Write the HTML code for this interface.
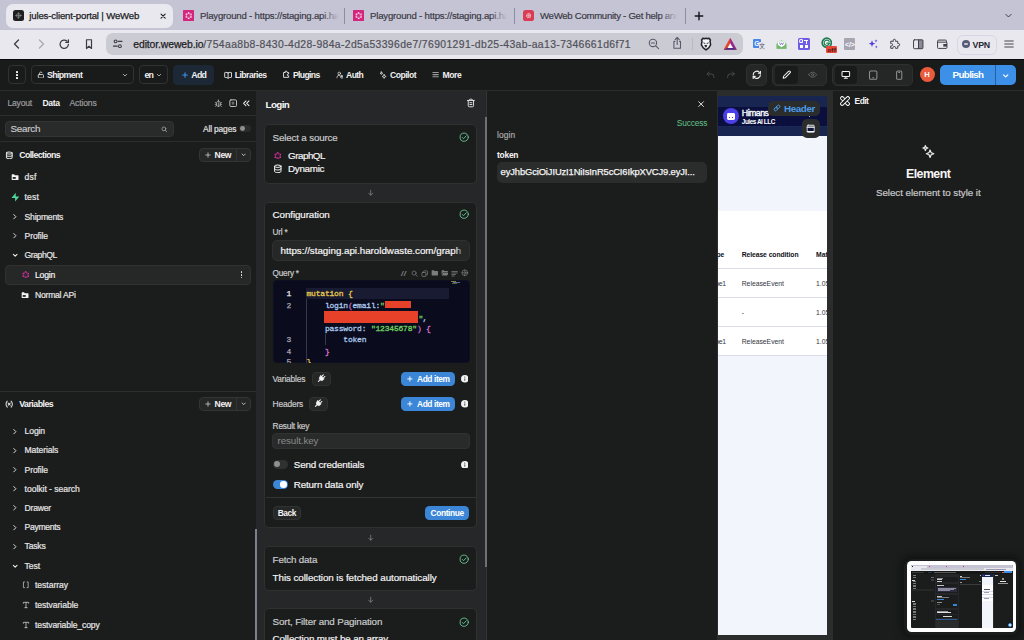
<!DOCTYPE html>
<html><head><meta charset="utf-8"><title>jules-client-portal | WeWeb</title>
<style>
*{box-sizing:border-box;margin:0;padding:0}
html,body{width:1024px;height:640px;overflow:hidden;background:#1c1d1d;font-family:"Liberation Sans",sans-serif;color:#e8e8e8}
.a{position:absolute;display:block}
.t{position:absolute;white-space:pre;display:block}
.p{display:inline-block;width:0;height:0}
</style></head><body>
<div class="a" style="left:0px;top:0px;width:1024px;height:30px;background:#c5c4d5;"></div>
<div class="a" style="left:0px;top:29.8px;width:1024px;height:29px;background:#e8e8ee;"></div>
<div class="a" style="left:6px;top:4px;width:167px;height:23.5px;background:#e8e8ee;border-radius:7px;"></div>
<div class="a" style="left:12.7px;top:10px;width:11.3px;height:11px;background:#1f1f22;border-radius:2.5px;"></div>
<svg class="a" style="left:14.8px;top:12.0px;" width="7" height="7" viewBox="0 0 24 24" fill="none" stroke="#8a8a8a" stroke-width="2.4" stroke-linecap="round" stroke-linejoin="round"><circle cx="12" cy="12" r="7"/><path d="M12 2v20M2 12h20"/></svg>
<span class="t" id="t0" style="left:29.3px;top:10.06px;font-size:9.6px;line-height:11.52px;color:#1c1c24;letter-spacing:-0.156px;-webkit-text-stroke:0.25px #1c1c24;">jules-client-portal | WeWeb</span>
<svg class="a" style="left:159.9px;top:12.5px;" width="6.2" height="6.2" viewBox="0 0 24 24" fill="none" stroke="#1d1c26" stroke-width="4.2" stroke-linecap="round" stroke-linejoin="round"><path d="M4 4l16 16M20 4L4 20"/></svg>
<div class="a" style="left:183px;top:9.9px;width:11px;height:11.1px;background:#d5267e;border-radius:0.6px;"></div>
<svg class="a" style="left:184.8px;top:11.8px;" width="7.4" height="7.4" viewBox="0 0 24 24" fill="none" stroke="#f3b3d4" stroke-width="1.6" stroke-linecap="round" stroke-linejoin="round"><path d="M12 3l7.800 4.500v9L12 21l-7.800-4.500v-9z" stroke-width="1.600"/><path d="M12 3l7.800 13.500H4.200z" stroke-width="1.400"/><circle cx="12" cy="3" r="2.300" fill="#fff" stroke="none"/><circle cx="12" cy="21" r="2.300" fill="#fff" stroke="none"/><circle cx="4.200" cy="7.500" r="2.300" fill="#fbe3f0" stroke="none"/><circle cx="19.800" cy="7.500" r="2.300" fill="#fbe3f0" stroke="none"/><circle cx="4.200" cy="16.500" r="2.300" fill="#fbe3f0" stroke="none"/><circle cx="19.800" cy="16.500" r="2.300" fill="#fbe3f0" stroke="none"/></svg>
<span class="t" id="t1" style="left:200px;top:10.06px;font-size:9.6px;line-height:11.52px;color:#3b3b46;letter-spacing:-0.189px;-webkit-text-stroke:0.2px #3b3b46;">Playground - https://staging.api.ha</span>
<div class="a" style="left:322px;top:6px;width:20px;height:19px;background:linear-gradient(90deg,rgba(197,196,213,0),#c5c4d5 85%);"></div>
<div class="a" style="left:344px;top:7.5px;width:1px;height:16px;background:#8f8da3;"></div>
<div class="a" style="left:353px;top:9.9px;width:11px;height:11.1px;background:#d5267e;border-radius:0.6px;"></div>
<svg class="a" style="left:354.8px;top:11.8px;" width="7.4" height="7.4" viewBox="0 0 24 24" fill="none" stroke="#f3b3d4" stroke-width="1.6" stroke-linecap="round" stroke-linejoin="round"><path d="M12 3l7.800 4.500v9L12 21l-7.800-4.500v-9z" stroke-width="1.600"/><path d="M12 3l7.800 13.500H4.200z" stroke-width="1.400"/><circle cx="12" cy="3" r="2.300" fill="#fff" stroke="none"/><circle cx="12" cy="21" r="2.300" fill="#fff" stroke="none"/><circle cx="4.200" cy="7.500" r="2.300" fill="#fbe3f0" stroke="none"/><circle cx="19.800" cy="7.500" r="2.300" fill="#fbe3f0" stroke="none"/><circle cx="4.200" cy="16.500" r="2.300" fill="#fbe3f0" stroke="none"/><circle cx="19.800" cy="16.500" r="2.300" fill="#fbe3f0" stroke="none"/></svg>
<span class="t" id="t2" style="left:370px;top:10.06px;font-size:9.6px;line-height:11.52px;color:#3b3b46;letter-spacing:-0.189px;-webkit-text-stroke:0.2px #3b3b46;">Playground - https://staging.api.ha</span>
<div class="a" style="left:490px;top:6px;width:20px;height:19px;background:linear-gradient(90deg,rgba(197,196,213,0),#c5c4d5 85%);"></div>
<div class="a" style="left:513.5px;top:7.5px;width:1px;height:16px;background:#8f8da3;"></div>
<div class="a" style="left:522.8px;top:9.9px;width:11.4px;height:11.3px;background:#d93c55;border-radius:2.6px;"></div>
<svg class="a" style="left:525.7px;top:12.7px;" width="5.6" height="5.6" viewBox="0 0 24 24" fill="none" stroke="#f6c3cc" stroke-width="3.4" stroke-linecap="round" stroke-linejoin="round"><circle cx="12" cy="12" r="9.500"/><path d="M12 3v18M3 12h18"/></svg>
<span class="t" id="t3" style="left:540px;top:10.06px;font-size:9.6px;line-height:11.52px;color:#3b3b46;letter-spacing:-0.281px;-webkit-text-stroke:0.2px #3b3b46;">WeWeb Community - Get help and</span>
<div class="a" style="left:660px;top:6px;width:21px;height:19px;background:linear-gradient(90deg,rgba(197,196,213,0),#c5c4d5 85%);"></div>
<div class="a" style="left:684.5px;top:7.5px;width:1px;height:16px;background:#8f8da3;"></div>
<svg class="a" style="left:693.5px;top:10.5px;" width="10" height="10" viewBox="0 0 24 24" fill="none" stroke="#15141c" stroke-width="3.4" stroke-linecap="round" stroke-linejoin="round"><path d="M12 3v18M3 12h18"/></svg>
<svg class="a" style="left:1003.5px;top:11.3px;" width="9" height="9" viewBox="0 0 24 24" fill="none" stroke="#3a3948" stroke-width="2.6" stroke-linecap="round" stroke-linejoin="round"><path d="M5 9l7 7 7-7"/></svg>
<svg class="a" style="left:11.0px;top:38.0px;" width="12" height="12" viewBox="0 0 24 24" fill="none" stroke="#3c3b46" stroke-width="2.5" stroke-linecap="round" stroke-linejoin="round"><path d="M15 4l-8 8 8 8"/></svg>
<svg class="a" style="left:34.5px;top:38.0px;" width="12" height="12" viewBox="0 0 24 24" fill="none" stroke="#a9a9b4" stroke-width="2.5" stroke-linecap="round" stroke-linejoin="round"><path d="M9 4l8 8-8 8"/></svg>
<svg class="a" style="left:58.25px;top:37.75px;" width="12.5" height="12.5" viewBox="0 0 24 24" fill="none" stroke="#3c3b46" stroke-width="2.4" stroke-linecap="round" stroke-linejoin="round"><path d="M20 12a8 8 0 1 1-2.600-5.900"/><path d="M20 3.500v5h-5" /></svg>
<svg class="a" style="left:83.0px;top:38.0px;" width="12" height="12" viewBox="0 0 24 24" fill="none" stroke="#3c3b46" stroke-width="2.4" stroke-linecap="round" stroke-linejoin="round"><path d="M7 3.500h10v17.500l-5-4.500-5 4.500z"/></svg>
<div class="a" style="left:105.5px;top:33px;width:637.5px;height:22.3px;background:#cbcbd3;border-radius:6.5px;"></div>
<svg class="a" style="left:112.25px;top:38.45px;" width="11.5" height="11.5" viewBox="0 0 24 24" fill="none" stroke="#3c3b46" stroke-width="2.2" stroke-linecap="round" stroke-linejoin="round"><circle cx="7.500" cy="7" r="3"/><path d="M13 7h8"/><circle cx="16.500" cy="17" r="3"/><path d="M3 17h8"/></svg>
<span class="t" id="t4" style="left:133.3px;top:39.14px;font-size:10.4px;line-height:12.48px;color:#1c1c24;letter-spacing:-0.108px;-webkit-text-stroke:0.25px #1c1c24;">editor.weweb.io</span>
<span class="t" id="t5" style="left:203.3px;top:39.14px;font-size:10.4px;line-height:12.48px;color:#50505a;letter-spacing:0.369px;-webkit-text-stroke:0.2px #50505a;">/754aa8b8-8430-4d28-984a-2d5a53396de7/76901291-db25-43ab-aa13-7346661d6f71</span>
<svg class="a" style="left:646.7px;top:37.4px;" width="13.6" height="13.6" viewBox="0 0 24 24" fill="none" stroke="#5a5868" stroke-width="1.9" stroke-linecap="round" stroke-linejoin="round"><circle cx="10.500" cy="10.500" r="6.500"/><path d="M15.500 15.500l5 5M7.500 10.500h6"/></svg>
<svg class="a" style="left:670.3px;top:36.1px;" width="14.4" height="14.4" viewBox="0 0 24 24" fill="none" stroke="#5a5868" stroke-width="1.8" stroke-linecap="round" stroke-linejoin="round"><path d="M12 14V3M8.500 6L12 2.500 15.500 6"/><path d="M8 9H6.500v11.500h11V9H16"/></svg>
<div class="a" style="left:692px;top:38px;width:1px;height:12px;background:#b9b7c8;"></div>
<svg class="a" style="left:699.0px;top:37.2px;" width="14" height="14" viewBox="0 0 24 24" fill="none" stroke="#e8e8e8" stroke-width="2" stroke-linecap="round" stroke-linejoin="round"><path d="M12 2.200l3.200.9 2-.9 2.400 2.900-.7 2 1 6.400-3.300 5.300L12 22.200l-4.600-3.400-3.300-5.300 1-6.400-.7-2 2.400-2.900 2 .9z" fill="#f6f6fa" stroke="#22222c" stroke-width="2.600"/><path d="M8.200 10.200l2 .8M15.800 10.200l-2 .8M10.500 14.500h3l-1.500 2.500z" stroke="#22222c" stroke-width="1.600" fill="#22222c"/></svg>
<svg class="a" style="left:721.95px;top:35.75px;" width="16.5" height="16.5" viewBox="0 0 24 24" fill="none" stroke="#e8e8e8" stroke-width="2" stroke-linecap="round" stroke-linejoin="round"><path d="M12 3L2.500 20h19z" fill="#e8432d" stroke="none"/><path d="M12 3L2.500 20 12 14.500z" fill="#e8432d" stroke="none"/><path d="M12 3l9.500 17L12 14.500z" fill="#8d2a9a" stroke="none"/><path d="M2.500 20h19L12 14.500z" fill="#4a2a8c" stroke="none"/><path d="M12 10.500l4 7h-8z" fill="#fff" stroke="none"/></svg>
<div class="a" style="left:752.7px;top:38.5px;width:8px;height:9.5px;background:#4a86e8;border-radius:1px;"></div>
<span class="t" id="t6" style="left:754.2px;top:39.54px;font-size:6.5px;line-height:7.8px;color:#fff;font-weight:bold;">G</span>
<div class="a" style="left:758.5px;top:42px;width:6px;height:8px;background:#e3e3ea;border-radius:1px;"></div>
<span class="t" id="t7" style="left:759.3px;top:43.18px;font-size:5.5px;line-height:6.6px;color:#55556a;font-family:'Liberation Sans','Noto Sans CJK SC',sans-serif;">文</span>
<svg class="a" style="left:774.9px;top:37.7px;" width="13" height="13" viewBox="0 0 24 24" fill="none" stroke="#e8e8e8" stroke-width="2" stroke-linecap="round" stroke-linejoin="round"><path d="M3 10l9-6 9 6v10H3z" fill="#86c582" stroke="none"/><path d="M5.500 6h13v8l-6.500 4-6.500-4z" fill="#fff" stroke="#9bd397" stroke-width=".6"/><path d="M3 11l9 6 9-6v9H3z" fill="#74b86f" stroke="none"/><path d="M8.500 9l1.500 3.500L12 9l2 3.500L15.500 9" stroke="#6a5acd" stroke-width="1.300" fill="none"/></svg>
<div class="a" style="left:798.4px;top:38.1px;width:11.7px;height:11.6px;background:#6e5be6;border-radius:1.6px;"></div>
<svg class="a" style="left:799.2px;top:39.3px;" width="4.2" height="4.2" viewBox="0 0 24 24" fill="none" stroke="#fff" stroke-width="6" stroke-linecap="round" stroke-linejoin="round"><circle cx="12" cy="12" r="9" fill="none"/></svg>
<div class="a" style="left:804.2px;top:39.7px;width:4.2px;height:1.4px;background:#fff;"></div>
<div class="a" style="left:805.6px;top:39.7px;width:1.4px;height:4px;background:#fff;"></div>
<div class="a" style="left:799.8px;top:44.8px;width:3.6px;height:3.4px;background:#fff;"></div>
<div class="a" style="left:804.8px;top:44.8px;width:3.6px;height:3.4px;background:#fff;"></div>
<svg class="a" style="left:820.75px;top:36.75px;" width="11.5" height="11.5" viewBox="0 0 24 24" fill="none" stroke="#e8e8e8" stroke-width="2" stroke-linecap="round" stroke-linejoin="round"><circle cx="12" cy="12" r="9.500" fill="#fff" stroke="#1f7a52" stroke-width="3.600"/><path d="M17 9.500A5.500 5.500 0 1 0 17.500 13H12" stroke="#1f7a52" stroke-width="2.600" fill="none"/></svg>
<div class="a" style="left:826px;top:46px;width:11px;height:7px;background:#e8483a;border-radius:1.2px;"></div>
<span class="t" id="t8" style="left:827.2px;top:45.63px;font-size:6.2px;line-height:7.44px;color:#3a1410;font-weight:bold;letter-spacing:0.365px;">off</span>
<div class="a" style="left:844px;top:38.3px;width:11.4px;height:11.4px;background:#a6a5b1;border-radius:1.2px;"></div>
<span class="t" id="t9" style="left:845px;top:40.52px;font-size:7px;line-height:8.4px;color:#fbfbff;font-weight:bold;letter-spacing:-0.175px;">&lt;/&gt;</span>
<svg class="a" style="left:866.5px;top:37.8px;" width="12" height="12" viewBox="0 0 24 24" fill="none" stroke="#e8e8e8" stroke-width="2" stroke-linecap="round" stroke-linejoin="round"><path d="M10 4.500l1.800 5 5 1.800-5 1.800L10 18l-1.800-4.900-5-1.800 5-1.800z" fill="#4f3be0" stroke="none"/><path d="M18 2.500l.9 2.400 2.400.9-2.400.9-.9 2.400-.9-2.400-2.400-.9 2.400-.9z" fill="#4f3be0" stroke="none"/><path d="M18.500 15l.8 2.100 2.100.8-2.100.8-.8 2.100-.8-2.100-2.100-.8 2.100-.8z" fill="#4f3be0" stroke="none"/></svg>
<svg class="a" style="left:888.0px;top:37.5px;" width="13" height="13" viewBox="0 0 24 24" fill="none" stroke="#3f3e4a" stroke-width="1.8" stroke-linecap="round" stroke-linejoin="round"><path d="M9.500 4.500a2.200 2.200 0 0 1 4.400 0V6H18v4.200h1.300a2.200 2.200 0 0 1 0 4.400H18V19h-4.200v-1.300a2.200 2.200 0 0 0-4.400 0V19H5v-4.400h1.300a2.200 2.200 0 0 0 0-4.400H5V6h4.500z"/></svg>
<svg class="a" style="left:912.25px;top:37.75px;" width="12.5" height="12.5" viewBox="0 0 24 24" fill="none" stroke="#3f3e4a" stroke-width="1.9" stroke-linecap="round" stroke-linejoin="round"><rect x="3" y="3.500" width="18" height="17" rx="1.500"/><rect x="12.500" y="3.500" width="8.500" height="17" fill="#3f3e4a" opacity=".55" stroke="none"/><path d="M12.500 3.500v17"/></svg>
<svg class="a" style="left:936.25px;top:38.05px;" width="12.5" height="12.5" viewBox="0 0 24 24" fill="none" stroke="#3f3e4a" stroke-width="1.9" stroke-linecap="round" stroke-linejoin="round"><path d="M20 8V5.500A1.500 1.500 0 0 0 18.500 4H5.500A2.500 2.500 0 0 0 3 6.500v12A1.500 1.500 0 0 0 4.500 20h15a1.500 1.500 0 0 0 1.500-1.500V9.500A1.500 1.500 0 0 0 19.500 8H3"/><rect x="14" y="11.500" width="7" height="5" fill="#3f3e4a" stroke="none"/></svg>
<div class="a" style="left:957px;top:34.5px;width:39.5px;height:20px;background:#e8e8ee;border-radius:6px;border:1px solid #d8d6e4;"></div>
<div class="a" style="left:962.3px;top:40.3px;width:7.6px;height:7.6px;background:#5a5b78;border-radius:4px;"></div>
<div class="a" style="left:964px;top:43.4px;width:4.2px;height:1.4px;background:#cbcbd3;border-radius:1px;"></div>
<span class="t" id="t10" style="left:972.6px;top:39.57px;font-size:8.8px;line-height:10.56px;color:#2a2935;font-weight:bold;letter-spacing:-0.231px;">VPN</span>
<svg class="a" style="left:1002.5px;top:38.2px;" width="12" height="12" viewBox="0 0 24 24" fill="none" stroke="#3f3e4a" stroke-width="1.9" stroke-linecap="round" stroke-linejoin="round"><path d="M3.500 6h17M3.500 12h17M3.500 18h17"/></svg>
<div class="a" style="left:0px;top:58.5px;width:1024px;height:32px;background:#191a1a;"></div>
<div class="a" style="left:0px;top:58.5px;width:1024px;height:1.3px;background:#0b0b0b;"></div>
<div class="a" style="left:0px;top:90px;width:1024px;height:0.8px;background:#2a2b2b;"></div>
<div class="a" style="left:8.2px;top:65.3px;width:18.3px;height:19.2px;background:#191a1a;border-radius:4px;border:1px solid #313232;"></div>
<div class="a" style="left:16.4px;top:71.0px;width:1.9px;height:1.9px;background:#f4f4f4;border-radius:0.6px;"></div>
<div class="a" style="left:16.4px;top:74.1px;width:1.9px;height:1.9px;background:#f4f4f4;border-radius:0.6px;"></div>
<div class="a" style="left:16.4px;top:77.2px;width:1.9px;height:1.9px;background:#f4f4f4;border-radius:0.6px;"></div>
<div class="a" style="left:31.2px;top:65.3px;width:102.6px;height:19.2px;background:#191a1a;border-radius:4px;border:1px solid #313232;"></div>
<svg class="a" style="left:36.8px;top:70.6px;" width="7.8" height="7.8" viewBox="0 0 24 24" fill="none" stroke="#dedede" stroke-width="2.8" stroke-linecap="round" stroke-linejoin="round"><rect x="4" y="11" width="16" height="10.500" rx="2.500"/><path d="M8 11V7a4 4 0 0 1 7.600-1.600"/></svg>
<span class="t" id="t11" style="left:47px;top:69.87px;font-size:8.8px;line-height:10.56px;color:#f0f0f0;font-weight:bold;letter-spacing:-0.610px;">Shipment</span>
<svg class="a" style="left:122.0px;top:72.0px;" width="6" height="6" viewBox="0 0 24 24" fill="none" stroke="#d0d0d0" stroke-width="3" stroke-linecap="round" stroke-linejoin="round"><path d="M5 9l7 7 7-7"/></svg>
<div class="a" style="left:139px;top:65.3px;width:28.6px;height:19.2px;background:#191a1a;border-radius:4px;border:1px solid #313232;"></div>
<span class="t" id="t12" style="left:144.5px;top:69.87px;font-size:8.8px;line-height:10.56px;color:#f0f0f0;font-weight:bold;letter-spacing:-0.791px;">en</span>
<svg class="a" style="left:156.3px;top:72.0px;" width="6" height="6" viewBox="0 0 24 24" fill="none" stroke="#d0d0d0" stroke-width="3" stroke-linecap="round" stroke-linejoin="round"><path d="M5 9l7 7 7-7"/></svg>
<div class="a" style="left:172.8px;top:65.3px;width:41.4px;height:19.4px;background:#1d2836;border-radius:4.5px;"></div>
<svg class="a" style="left:181.6px;top:71.7px;" width="6" height="6" viewBox="0 0 24 24" fill="none" stroke="#3f8fe8" stroke-width="4.4" stroke-linecap="round" stroke-linejoin="round"><path d="M12 3v18M3 12h18"/></svg>
<span class="t" id="t13" style="left:191.3px;top:69.87px;font-size:8.8px;line-height:10.56px;color:#f0f0f0;font-weight:bold;letter-spacing:-0.703px;">Add</span>
<svg class="a" style="left:224.3px;top:70.6px;" width="8.2" height="8.2" viewBox="0 0 24 24" fill="none" stroke="#e4e4e4" stroke-width="2.7" stroke-linecap="round" stroke-linejoin="round"><path d="M12 5.500C10.500 4.300 8 4 3.500 4a1.500 1.500 0 0 0-1.500 1.500v12A1.500 1.500 0 0 0 3.500 19c4 0 6.500.300 8.500 2 2-1.700 4.500-2 8.500-2a1.500 1.500 0 0 0 1.500-1.500v-12A1.500 1.500 0 0 0 20.500 4C16 4 13.500 4.300 12 5.500zM12 5.500V21"/></svg>
<span class="t" id="t14" style="left:234.7px;top:69.8px;font-size:8.6px;line-height:10.32px;color:#f0f0f0;font-weight:bold;letter-spacing:-0.490px;">Libraries</span>
<svg class="a" style="left:282.0px;top:70.3px;" width="8.4" height="8.4" viewBox="0 0 24 24" fill="none" stroke="#e4e4e4" stroke-width="2.7" stroke-linecap="round" stroke-linejoin="round"><path d="M8.500 6a3 3 0 0 1 6 0v1H19v4.500h-1.500a2.500 2.500 0 0 0 0 5H19V21H4.500V7h4z"/></svg>
<span class="t" id="t15" style="left:293px;top:69.8px;font-size:8.6px;line-height:10.32px;color:#f0f0f0;font-weight:bold;letter-spacing:-0.635px;">Plugins</span>
<svg class="a" style="left:335.6px;top:70.8px;" width="7.8" height="7.8" viewBox="0 0 24 24" fill="none" stroke="#e0e0e0" stroke-width="2.4" stroke-linecap="round" stroke-linejoin="round"><circle cx="10" cy="7.500" r="4"/><path d="M3 21v-1.500a6 6 0 0 1 9-5.200"/><rect x="14.500" y="16" width="7" height="5.500" rx="1"/><path d="M16.500 16v-1.500a1.500 1.500 0 0 1 3 0V16"/></svg>
<span class="t" id="t16" style="left:346px;top:69.8px;font-size:8.6px;line-height:10.32px;color:#f0f0f0;font-weight:bold;letter-spacing:-0.570px;">Auth</span>
<svg class="a" style="left:379.4px;top:70.6px;" width="8.2" height="8.2" viewBox="0 0 24 24" fill="none" stroke="#e0e0e0" stroke-width="2.2" stroke-linecap="round" stroke-linejoin="round"><path d="M15 10l1.700 4.300L21 16l-4.300 1.700L15 22l-1.700-4.300L9 16l4.300-1.700z"/><path d="M7 2.500l1.100 2.900L11 6.500 8.100 7.600 7 10.500 5.900 7.600 3 6.500l2.900-1.100z"/></svg>
<span class="t" id="t17" style="left:390px;top:69.8px;font-size:8.6px;line-height:10.32px;color:#f0f0f0;font-weight:bold;letter-spacing:-0.513px;">Copilot</span>
<svg class="a" style="left:432.4px;top:71.1px;" width="7.2" height="7.2" viewBox="0 0 24 24" fill="none" stroke="#9c9c9c" stroke-width="3.6" stroke-linecap="round" stroke-linejoin="round"><path d="M3 5h18M3 12h18M3 19h18"/></svg>
<span class="t" id="t18" style="left:442.5px;top:69.8px;font-size:8.6px;line-height:10.32px;color:#f0f0f0;font-weight:bold;letter-spacing:-0.437px;">More</span>
<svg class="a" style="left:705.75px;top:69.95px;" width="9.5" height="9.5" viewBox="0 0 24 24" fill="none" stroke="#4b4c4c" stroke-width="2.4" stroke-linecap="round" stroke-linejoin="round"><path d="M8 5L3 10l5 5"/><path d="M3 10h10a7 7 0 0 1 7 7v2"/></svg>
<svg class="a" style="left:726.05px;top:69.95px;" width="9.5" height="9.5" viewBox="0 0 24 24" fill="none" stroke="#4b4c4c" stroke-width="2.4" stroke-linecap="round" stroke-linejoin="round"><path d="M16 5l5 5-5 5"/><path d="M21 10H11a7 7 0 0 0-7 7v2"/></svg>
<div class="a" style="left:746px;top:64px;width:21.2px;height:21.6px;background:#252626;border-radius:5px;border:1px solid #2e2f2f;"></div>
<svg class="a" style="left:751.8px;top:70.0px;" width="9.6" height="9.6" viewBox="0 0 24 24" fill="none" stroke="#f2f2f2" stroke-width="2.8" stroke-linecap="round" stroke-linejoin="round"><path d="M3 12a9 9 0 0 1 15.500-6.200L21 8"/><path d="M21 3v5h-5"/><path d="M21 12a9 9 0 0 1-15.500 6.200L3 16"/><path d="M3 21v-5h5"/></svg>
<div class="a" style="left:772.2px;top:64px;width:54.4px;height:21.6px;background:#252626;border-radius:5px;border:1px solid #2e2f2f;"></div>
<div class="a" style="left:775px;top:66.2px;width:22.6px;height:17.4px;background:#191a1a;border-radius:4px;"></div>
<svg class="a" style="left:781.6px;top:70.1px;" width="9.4" height="9.4" viewBox="0 0 24 24" fill="none" stroke="#f2f2f2" stroke-width="2.6" stroke-linecap="round" stroke-linejoin="round"><path d="M16.500 3.500a2.800 2.800 0 0 1 4 4L8 20l-5 1 1-5z"/></svg>
<svg class="a" style="left:808.3px;top:70.1px;" width="9.4" height="9.4" viewBox="0 0 24 24" fill="none" stroke="#6a6b6b" stroke-width="2.2" stroke-linecap="round" stroke-linejoin="round"><path d="M2 12s3.600-6.500 10-6.500S22 12 22 12s-3.600 6.500-10 6.500S2 12 2 12z"/><circle cx="12" cy="12" r="2.800"/></svg>
<div class="a" style="left:832.2px;top:64px;width:80.4px;height:21.6px;background:#252626;border-radius:5px;border:1px solid #2e2f2f;"></div>
<div class="a" style="left:834.7px;top:66.2px;width:22.4px;height:17.4px;background:#191a1a;border-radius:4px;"></div>
<svg class="a" style="left:841.2px;top:69.8px;" width="9.6" height="9.6" viewBox="0 0 24 24" fill="none" stroke="#f2f2f2" stroke-width="2.6" stroke-linecap="round" stroke-linejoin="round"><rect x="2.500" y="4" width="19" height="12.500" rx="2"/><rect x="6.500" y="8.500" width="11" height="3.500" fill="#050505" stroke="none"/><path d="M8 20.500h8M12 16.500v4"/></svg>
<svg class="a" style="left:867.6px;top:69.6px;" width="10.4" height="10.4" viewBox="0 0 24 24" fill="none" stroke="#8e8f8f" stroke-width="2.4" stroke-linecap="round" stroke-linejoin="round"><rect x="3.500" y="2.500" width="17" height="19" rx="2.500"/><path d="M11 18h2"/></svg>
<svg class="a" style="left:894.1px;top:69.6px;" width="10.4" height="10.4" viewBox="0 0 24 24" fill="none" stroke="#8e8f8f" stroke-width="2.4" stroke-linecap="round" stroke-linejoin="round"><rect x="6" y="2.500" width="12" height="19" rx="2.500"/><path d="M11 5.500h2"/></svg>
<div class="a" style="left:919.6px;top:66.7px;width:15.4px;height:15.4px;background:#ea5a3c;border-radius:8px;"></div>
<span class="t" id="t19" style="left:924.3px;top:70.34px;font-size:7.6px;line-height:9.12px;color:#fff;font-weight:bold;">H</span>
<div class="a" style="left:940px;top:64.8px;width:75.8px;height:20px;background:#3d90e8;border-radius:5px;"></div>
<div class="a" style="left:995.2px;top:64.8px;width:0.8px;height:20px;background:#2a5f9e;"></div>
<span class="t" id="t20" style="left:952.6px;top:69.33px;font-size:9.8px;line-height:11.76px;color:#fff;font-weight:bold;letter-spacing:-0.656px;">Publish</span>
<svg class="a" style="left:1002.1px;top:71.5px;" width="7.4" height="7.4" viewBox="0 0 24 24" fill="none" stroke="#fff" stroke-width="3.6" stroke-linecap="round" stroke-linejoin="round"><path d="M5 9l7 7 7-7"/></svg>
<div class="a" style="left:0px;top:90.8px;width:256px;height:550px;background:#1b1c1c;"></div>
<div class="a" style="left:256px;top:90.8px;width:231px;height:550px;background:#262728;"></div>
<div class="a" style="left:487px;top:90.8px;width:230px;height:550px;background:#1b1c1c;"></div>
<div class="a" style="left:717px;top:90.8px;width:116px;height:550px;background:#2b2c2c;"></div>
<div class="a" style="left:833px;top:90.8px;width:191px;height:550px;background:#1b1c1c;"></div>
<span class="t" id="t21" style="left:7.5px;top:98.3px;font-size:8.6px;line-height:10.32px;color:#9b9c9c;letter-spacing:-0.219px;-webkit-text-stroke:0.2px #9b9c9c;">Layout</span>
<span class="t" id="t22" style="left:42.5px;top:98.3px;font-size:8.6px;line-height:10.32px;color:#f4f4f4;font-weight:bold;letter-spacing:-0.385px;">Data</span>
<span class="t" id="t23" style="left:69.5px;top:98.3px;font-size:8.6px;line-height:10.32px;color:#9b9c9c;letter-spacing:-0.155px;-webkit-text-stroke:0.2px #9b9c9c;">Actions</span>
<svg class="a" style="left:214.1px;top:98.7px;" width="8.8" height="8.8" viewBox="0 0 24 24" fill="none" stroke="#b8b8b8" stroke-width="2" stroke-linecap="round" stroke-linejoin="round"><path d="M12 5.500c3 0 5 2.500 5 6.500v3c0 3-2 5.500-5 5.500s-5-2.500-5-5.500v-3c0-4 2-6.500 5-6.500z"/><path d="M12 2.500v3M12 10v10.500M3.500 9.500l3.500 2M20.500 9.500l-3.500 2M3 14.500h4M17 14.500h4M4 20l3.500-2.500M20 20l-3.500-2.500"/></svg>
<svg class="a" style="left:228.6px;top:99.1px;" width="8.4" height="8.4" viewBox="0 0 24 24" fill="none" stroke="#cfcfcf" stroke-width="2.6" stroke-linecap="round" stroke-linejoin="round"><rect x="2.500" y="2.500" width="19" height="19" rx="3"/><path d="M9.500 9v6M13.500 9v6" stroke-width="1.600"/></svg>
<svg class="a" style="left:242.2px;top:98.9px;" width="8.6" height="8.6" viewBox="0 0 24 24" fill="none" stroke="#f0f0f0" stroke-width="2.8" stroke-linecap="round" stroke-linejoin="round"><path d="M11 5.500l-6.500 6.500 6.500 6.500M19.500 5.500L13 12l6.500 6.500"/></svg>
<div class="a" style="left:0px;top:114.8px;width:256.5px;height:0.8px;background:#2c2d2d;"></div>
<div class="a" style="left:5px;top:121px;width:169.3px;height:15.6px;background:#292a2a;border-radius:4px;border:1px solid #333434;"></div>
<span class="t" id="t24" style="left:10.5px;top:123.13px;font-size:9.8px;line-height:11.76px;color:#c6c7c7;letter-spacing:-0.224px;-webkit-text-stroke:0.2px #c6c7c7;">Search</span>
<svg class="a" style="left:161.3px;top:125.5px;" width="6.6" height="6.6" viewBox="0 0 24 24" fill="none" stroke="#a8a9a9" stroke-width="2.8" stroke-linecap="round" stroke-linejoin="round"><circle cx="10.500" cy="10.500" r="7"/><path d="M16 16l5.500 5.500"/></svg>
<span class="t" id="t25" style="left:203px;top:123.82px;font-size:8.4px;line-height:10.08px;color:#e0e0e0;letter-spacing:-0.139px;-webkit-text-stroke:0.2px #e0e0e0;">All pages</span>
<div class="a" style="left:239px;top:125.3px;width:12px;height:7px;background:#2a2b2b;border-radius:3.5px;"></div>
<div class="a" style="left:239.8px;top:126.4px;width:4.8px;height:4.8px;background:#8f9090;border-radius:2.4px;"></div>
<div class="a" style="left:0px;top:141.3px;width:256.5px;height:0.8px;background:#2c2d2d;"></div>
<svg class="a" style="left:5.2px;top:150.7px;" width="8.6" height="8.6" viewBox="0 0 24 24" fill="none" stroke="#e0e0e0" stroke-width="2.8" stroke-linecap="round" stroke-linejoin="round"><ellipse cx="12" cy="5.500" rx="8" ry="3"/><path d="M4 5.500v13c0 1.700 3.600 3 8 3s8-1.300 8-3v-13"/><path d="M4 12c0 1.700 3.600 3 8 3s8-1.300 8-3"/></svg>
<span class="t" id="t26" style="left:19.2px;top:150.17px;font-size:8.8px;line-height:10.56px;color:#f4f4f4;font-weight:bold;letter-spacing:-0.584px;">Collections</span>
<div class="a" style="left:199.2px;top:147.6px;width:52px;height:14.6px;background:#252626;border-radius:4px;border:1px solid #333434;"></div>
<svg class="a" style="left:205.0px;top:151.9px;" width="6" height="6" viewBox="0 0 24 24" fill="none" stroke="#e0e0e0" stroke-width="2.8" stroke-linecap="round" stroke-linejoin="round"><path d="M12 3v18M3 12h18"/></svg>
<span class="t" id="t27" style="left:214.6px;top:150.1px;font-size:8.6px;line-height:10.32px;color:#f2f2f2;font-weight:bold;letter-spacing:-0.357px;">New</span>
<div class="a" style="left:236.2px;top:148.1px;width:0.8px;height:13.6px;background:#333434;"></div>
<svg class="a" style="left:240.9px;top:152.4px;" width="5.4" height="5.4" viewBox="0 0 24 24" fill="none" stroke="#e8e8e8" stroke-width="3.4" stroke-linecap="round" stroke-linejoin="round"><path d="M5 9l7 7 7-7"/></svg>
<svg class="a" style="left:10.9px;top:173.1px;" width="8.2" height="8.2" viewBox="0 0 24 24" fill="none" stroke="#e8e8e8" stroke-width="2" stroke-linecap="round" stroke-linejoin="round"><path d="M2 5.500A1.500 1.500 0 0 1 3.500 4h5.500l2 2.500h9.500A1.500 1.500 0 0 1 22 8v11a1.500 1.500 0 0 1-1.500 1.500h-17A1.500 1.500 0 0 1 2 19z" fill="#f2f2f2" stroke="none"/><rect x="5" y="12" width="9" height="5" fill="#1b1c1c" stroke="none"/></svg>
<span class="t" id="t28" style="left:24.6px;top:172.3px;font-size:8.6px;line-height:10.32px;color:#e6e6e6;letter-spacing:0.144px;-webkit-text-stroke:0.2px #e6e6e6;">dsf</span>
<svg class="a" style="left:10.0px;top:192.0px;" width="10.4" height="10.4" viewBox="0 0 24 24" fill="none" stroke="#e8e8e8" stroke-width="2" stroke-linecap="round" stroke-linejoin="round"><path d="M13.200 2L3.500 13.800h8.300v8.200L21.500 10.200h-8.300z" fill="#4fd79a" stroke="none"/></svg>
<span class="t" id="t29" style="left:24.6px;top:192.3px;font-size:8.6px;line-height:10.32px;color:#e6e6e6;letter-spacing:0.135px;-webkit-text-stroke:0.2px #e6e6e6;">test</span>
<svg class="a" style="left:10.6px;top:213.0px;" width="7.4" height="7.4" viewBox="0 0 24 24" fill="none" stroke="#dcdcdc" stroke-width="3.2" stroke-linecap="round" stroke-linejoin="round"><path d="M9 5l7 7-7 7"/></svg>
<span class="t" id="t30" style="left:24.6px;top:211.8px;font-size:8.6px;line-height:10.32px;color:#e6e6e6;letter-spacing:-0.223px;-webkit-text-stroke:0.2px #e6e6e6;">Shipments</span>
<svg class="a" style="left:10.6px;top:232.1px;" width="7.4" height="7.4" viewBox="0 0 24 24" fill="none" stroke="#dcdcdc" stroke-width="3.2" stroke-linecap="round" stroke-linejoin="round"><path d="M9 5l7 7-7 7"/></svg>
<span class="t" id="t31" style="left:24.6px;top:230.9px;font-size:8.6px;line-height:10.32px;color:#e6e6e6;letter-spacing:-0.137px;-webkit-text-stroke:0.2px #e6e6e6;">Profile</span>
<svg class="a" style="left:11.6px;top:252.0px;" width="6.4" height="6.4" viewBox="0 0 24 24" fill="none" stroke="#f0f0f0" stroke-width="4" stroke-linecap="round" stroke-linejoin="round"><path d="M5 8.500l7 7 7-7"/></svg>
<span class="t" id="t32" style="left:24.6px;top:250.1px;font-size:8.6px;line-height:10.32px;color:#e6e6e6;letter-spacing:-0.451px;-webkit-text-stroke:0.2px #e6e6e6;">GraphQL</span>
<div class="a" style="left:5px;top:265px;width:246.2px;height:19.6px;background:#262727;border-radius:4px;border:1px solid #303131;"></div>
<svg class="a" style="left:21.8px;top:270.8px;" width="7.6" height="7.6" viewBox="0 0 24 24" fill="none" stroke="#c42f95" stroke-width="1.8" stroke-linecap="round" stroke-linejoin="round"><path d="M12 2.500l8.200 4.750v9.500L12 21.500l-8.200-4.750v-9.500z"/><path d="M12 2.500l8.200 14.250H3.800z" stroke-width="1.800"/><circle cx="12" cy="2.500" r="2.100" fill="#d936a6" stroke="none"/><circle cx="12" cy="21.500" r="2.100" fill="#d936a6" stroke="none"/><circle cx="3.800" cy="7.250" r="2.100" fill="#d936a6" stroke="none"/><circle cx="20.200" cy="7.250" r="2.100" fill="#d936a6" stroke="none"/><circle cx="3.800" cy="16.750" r="2.100" fill="#d936a6" stroke="none"/><circle cx="20.200" cy="16.750" r="2.100" fill="#d936a6" stroke="none"/></svg>
<span class="t" id="t33" style="left:35px;top:269.7px;font-size:8.6px;line-height:10.32px;color:#f4f4f4;letter-spacing:-0.166px;-webkit-text-stroke:0.2px #f4f4f4;">Login</span>
<div class="a" style="left:240.8px;top:271.4px;width:1.5px;height:1.5px;background:#f0f0f0;border-radius:1px;"></div>
<div class="a" style="left:240.8px;top:274.09999999999997px;width:1.5px;height:1.5px;background:#f0f0f0;border-radius:1px;"></div>
<div class="a" style="left:240.8px;top:276.79999999999995px;width:1.5px;height:1.5px;background:#f0f0f0;border-radius:1px;"></div>
<svg class="a" style="left:21.4px;top:290.5px;" width="8.2" height="8.2" viewBox="0 0 24 24" fill="none" stroke="#e8e8e8" stroke-width="2" stroke-linecap="round" stroke-linejoin="round"><path d="M2 5.500A1.500 1.500 0 0 1 3.500 4h5.500l2 2.500h9.500A1.500 1.500 0 0 1 22 8v11a1.500 1.500 0 0 1-1.500 1.500h-17A1.500 1.500 0 0 1 2 19z" fill="#f2f2f2" stroke="none"/><rect x="5" y="12" width="9" height="5" fill="#1b1c1c" stroke="none"/></svg>
<span class="t" id="t34" style="left:35px;top:289.6px;font-size:8.6px;line-height:10.32px;color:#e6e6e6;letter-spacing:-0.238px;-webkit-text-stroke:0.2px #e6e6e6;">Normal APi</span>
<div class="a" style="left:0px;top:391px;width:256.5px;height:0.8px;background:#2c2d2d;"></div>
<svg class="a" style="left:5.3px;top:399.8px;" width="8.4" height="8.4" viewBox="0 0 24 24" fill="none" stroke="#e4e4e4" stroke-width="2.9" stroke-linecap="round" stroke-linejoin="round"><path d="M6.500 3.500C4 6 3 9 3 12s1 6 3.500 8.500M17.500 3.500C20 6 21 9 21 12s-1 6-3.500 8.500M9 9l6 6M15 9l-6 6"/></svg>
<span class="t" id="t35" style="left:19.2px;top:398.87px;font-size:8.8px;line-height:10.56px;color:#f4f4f4;font-weight:bold;letter-spacing:-0.516px;">Variables</span>
<div class="a" style="left:199.2px;top:396.5px;width:52px;height:14.6px;background:#252626;border-radius:4px;border:1px solid #333434;"></div>
<svg class="a" style="left:205.0px;top:400.8px;" width="6" height="6" viewBox="0 0 24 24" fill="none" stroke="#e0e0e0" stroke-width="2.8" stroke-linecap="round" stroke-linejoin="round"><path d="M12 3v18M3 12h18"/></svg>
<span class="t" id="t36" style="left:214.6px;top:399.0px;font-size:8.6px;line-height:10.32px;color:#f2f2f2;font-weight:bold;letter-spacing:-0.357px;">New</span>
<div class="a" style="left:236.2px;top:397.0px;width:0.8px;height:13.6px;background:#333434;"></div>
<svg class="a" style="left:240.9px;top:401.3px;" width="5.4" height="5.4" viewBox="0 0 24 24" fill="none" stroke="#e8e8e8" stroke-width="3.4" stroke-linecap="round" stroke-linejoin="round"><path d="M5 9l7 7 7-7"/></svg>
<svg class="a" style="left:10.6px;top:427.5px;" width="7.4" height="7.4" viewBox="0 0 24 24" fill="none" stroke="#dcdcdc" stroke-width="3.2" stroke-linecap="round" stroke-linejoin="round"><path d="M9 5l7 7-7 7"/></svg>
<span class="t" id="t37" style="left:24.6px;top:426.3px;font-size:8.6px;line-height:10.32px;color:#e6e6e6;letter-spacing:-0.126px;-webkit-text-stroke:0.2px #e6e6e6;">Login</span>
<svg class="a" style="left:10.6px;top:446.6px;" width="7.4" height="7.4" viewBox="0 0 24 24" fill="none" stroke="#dcdcdc" stroke-width="3.2" stroke-linecap="round" stroke-linejoin="round"><path d="M9 5l7 7-7 7"/></svg>
<span class="t" id="t38" style="left:24.6px;top:445.4px;font-size:8.6px;line-height:10.32px;color:#e6e6e6;letter-spacing:-0.131px;-webkit-text-stroke:0.2px #e6e6e6;">Materials</span>
<svg class="a" style="left:10.6px;top:465.8px;" width="7.4" height="7.4" viewBox="0 0 24 24" fill="none" stroke="#dcdcdc" stroke-width="3.2" stroke-linecap="round" stroke-linejoin="round"><path d="M9 5l7 7-7 7"/></svg>
<span class="t" id="t39" style="left:24.6px;top:464.6px;font-size:8.6px;line-height:10.32px;color:#e6e6e6;letter-spacing:-0.137px;-webkit-text-stroke:0.2px #e6e6e6;">Profile</span>
<svg class="a" style="left:10.6px;top:485.0px;" width="7.4" height="7.4" viewBox="0 0 24 24" fill="none" stroke="#dcdcdc" stroke-width="3.2" stroke-linecap="round" stroke-linejoin="round"><path d="M9 5l7 7-7 7"/></svg>
<span class="t" id="t40" style="left:24.6px;top:483.8px;font-size:8.6px;line-height:10.32px;color:#e6e6e6;letter-spacing:-0.043px;-webkit-text-stroke:0.2px #e6e6e6;">toolkit - search</span>
<svg class="a" style="left:10.6px;top:504.3px;" width="7.4" height="7.4" viewBox="0 0 24 24" fill="none" stroke="#dcdcdc" stroke-width="3.2" stroke-linecap="round" stroke-linejoin="round"><path d="M9 5l7 7-7 7"/></svg>
<span class="t" id="t41" style="left:24.6px;top:503.1px;font-size:8.6px;line-height:10.32px;color:#e6e6e6;letter-spacing:-0.251px;-webkit-text-stroke:0.2px #e6e6e6;">Drawer</span>
<svg class="a" style="left:10.6px;top:523.5px;" width="7.4" height="7.4" viewBox="0 0 24 24" fill="none" stroke="#dcdcdc" stroke-width="3.2" stroke-linecap="round" stroke-linejoin="round"><path d="M9 5l7 7-7 7"/></svg>
<span class="t" id="t42" style="left:24.6px;top:522.3px;font-size:8.6px;line-height:10.32px;color:#e6e6e6;letter-spacing:-0.315px;-webkit-text-stroke:0.2px #e6e6e6;">Payments</span>
<svg class="a" style="left:10.6px;top:542.6px;" width="7.4" height="7.4" viewBox="0 0 24 24" fill="none" stroke="#dcdcdc" stroke-width="3.2" stroke-linecap="round" stroke-linejoin="round"><path d="M9 5l7 7-7 7"/></svg>
<span class="t" id="t43" style="left:24.6px;top:541.4px;font-size:8.6px;line-height:10.32px;color:#e6e6e6;letter-spacing:-0.214px;-webkit-text-stroke:0.2px #e6e6e6;">Tasks</span>
<svg class="a" style="left:11.6px;top:562.5px;" width="6.4" height="6.4" viewBox="0 0 24 24" fill="none" stroke="#f0f0f0" stroke-width="4" stroke-linecap="round" stroke-linejoin="round"><path d="M5 8.500l7 7 7-7"/></svg>
<span class="t" id="t44" style="left:24.6px;top:560.6px;font-size:8.6px;line-height:10.32px;color:#e6e6e6;letter-spacing:-0.041px;-webkit-text-stroke:0.2px #e6e6e6;">Test</span>
<svg class="a" style="left:21.7px;top:581.4px;" width="7.6" height="7.6" viewBox="0 0 24 24" fill="none" stroke="#c8c8c8" stroke-width="2.4" stroke-linecap="round" stroke-linejoin="round"><path d="M8 3H4.500v18H8M16 3h3.500v18H16"/></svg>
<span class="t" id="t45" style="left:35px;top:580.3px;font-size:8.6px;line-height:10.32px;color:#e6e6e6;letter-spacing:-0.049px;-webkit-text-stroke:0.2px #e6e6e6;">testarray</span>
<svg class="a" style="left:21.5px;top:601.0px;" width="8" height="8" viewBox="0 0 24 24" fill="none" stroke="#d8d8d8" stroke-width="2.2" stroke-linecap="round" stroke-linejoin="round"><path d="M4 7V4h16v3M12 4v16M8.500 20h7"/></svg>
<span class="t" id="t46" style="left:35px;top:600.1px;font-size:8.6px;line-height:10.32px;color:#e6e6e6;letter-spacing:-0.063px;-webkit-text-stroke:0.2px #e6e6e6;">testvariable</span>
<svg class="a" style="left:21.5px;top:620.8px;" width="8" height="8" viewBox="0 0 24 24" fill="none" stroke="#d8d8d8" stroke-width="2.2" stroke-linecap="round" stroke-linejoin="round"><path d="M4 7V4h16v3M12 4v16M8.500 20h7"/></svg>
<span class="t" id="t47" style="left:35px;top:619.9px;font-size:8.6px;line-height:10.32px;color:#e6e6e6;letter-spacing:-0.135px;-webkit-text-stroke:0.2px #e6e6e6;">testvariable_copy</span>
<div class="a" style="left:254.5px;top:528.8px;width:2px;height:112px;background:#7b808c;"></div>
<span class="t" id="t48" style="left:265.6px;top:99.13px;font-size:9.8px;line-height:11.76px;color:#f6f6f6;font-weight:bold;letter-spacing:-0.614px;">Login</span>
<svg class="a" style="left:466.0px;top:98.0px;" width="9.8" height="9.8" viewBox="0 0 24 24" fill="none" stroke="#e6e6e6" stroke-width="2.3" stroke-linecap="round" stroke-linejoin="round"><path d="M3.500 6h17M8.500 6V4.500A1.500 1.500 0 0 1 10 3h4a1.500 1.500 0 0 1 1.500 1.500V6M5.500 6v13a2.500 2.500 0 0 0 2.500 2.500h8a2.500 2.500 0 0 0 2.500-2.500V6M9.500 11.500h5M9.500 16h5"/></svg>
<div class="a" style="left:486.4px;top:91px;width:0.8px;height:549px;background:#343535;"></div>
<div class="a" style="left:484.8px;top:116.5px;width:2.1px;height:450.4px;background:#6d7278;"></div>
<div class="a" style="left:264.2px;top:124.2px;width:213px;height:59.9px;background:#1b1c1c;border-radius:5px;border:1px solid #2f3030;"></div>
<span class="t" id="t49" style="left:272.6px;top:132.03px;font-size:9.8px;line-height:11.76px;color:#c9caca;letter-spacing:-0.169px;-webkit-text-stroke:0.2px #c9caca;">Select a source</span>
<svg class="a" style="left:458.8px;top:132.4px;" width="10.4" height="10.4" viewBox="0 0 24 24" fill="none" stroke="#68c995" stroke-width="2.1" stroke-linecap="round" stroke-linejoin="round"><circle cx="12" cy="12" r="9.500"/><path d="M7.500 12.500l3 3 6-6.500"/></svg>
<svg class="a" style="left:273.7px;top:151.6px;" width="7.8" height="7.8" viewBox="0 0 24 24" fill="none" stroke="#c42f95" stroke-width="1.8" stroke-linecap="round" stroke-linejoin="round"><path d="M12 2.500l8.200 4.750v9.500L12 21.500l-8.200-4.750v-9.500z"/><path d="M12 2.500l8.200 14.250H3.800z" stroke-width="1.800"/><circle cx="12" cy="2.500" r="2.100" fill="#d936a6" stroke="none"/><circle cx="12" cy="21.500" r="2.100" fill="#d936a6" stroke="none"/><circle cx="3.800" cy="7.250" r="2.100" fill="#d936a6" stroke="none"/><circle cx="20.200" cy="7.250" r="2.100" fill="#d936a6" stroke="none"/><circle cx="3.800" cy="16.750" r="2.100" fill="#d936a6" stroke="none"/><circle cx="20.200" cy="16.750" r="2.100" fill="#d936a6" stroke="none"/></svg>
<span class="t" id="t50" style="left:288px;top:150.03px;font-size:9.8px;line-height:11.76px;color:#f4f4f4;letter-spacing:-0.473px;-webkit-text-stroke:0.2px #f4f4f4;">GraphQL</span>
<svg class="a" style="left:272.7px;top:163.6px;" width="9.6" height="9.6" viewBox="0 0 24 24" fill="none" stroke="#f4f4f4" stroke-width="2.5" stroke-linecap="round" stroke-linejoin="round"><ellipse cx="12" cy="5.500" rx="8" ry="3"/><path d="M4 5.500v13c0 1.700 3.600 3 8 3s8-1.300 8-3v-13"/><path d="M4 12c0 1.700 3.600 3 8 3s8-1.300 8-3"/></svg>
<span class="t" id="t51" style="left:288px;top:163.03px;font-size:9.8px;line-height:11.76px;color:#f4f4f4;letter-spacing:-0.273px;-webkit-text-stroke:0.2px #f4f4f4;">Dynamic</span>
<svg class="a" style="left:367.1px;top:189.3px;" width="7.4" height="7.4" viewBox="0 0 24 24" fill="none" stroke="#8a8b8b" stroke-width="2.4" stroke-linecap="round" stroke-linejoin="round"><path d="M12 4v16M5.500 13.500L12 20l6.500-6.500"/></svg>
<div class="a" style="left:264.2px;top:202.2px;width:213px;height:326.2px;background:#1b1c1c;border-radius:5px;border:1px solid #2f3030;"></div>
<span class="t" id="t52" style="left:272.6px;top:209.13px;font-size:9.8px;line-height:11.76px;color:#f4f4f4;letter-spacing:-0.099px;-webkit-text-stroke:0.2px #f4f4f4;">Configuration</span>
<svg class="a" style="left:458.8px;top:209.4px;" width="10.4" height="10.4" viewBox="0 0 24 24" fill="none" stroke="#68c995" stroke-width="2.1" stroke-linecap="round" stroke-linejoin="round"><circle cx="12" cy="12" r="9.500"/><path d="M7.500 12.500l3 3 6-6.500"/></svg>
<span class="t" id="t53" style="left:272.6px;top:228.15px;font-size:8.2px;line-height:9.84px;color:#c9caca;letter-spacing:-0.184px;-webkit-text-stroke:0.2px #c9caca;">Url *</span>
<div class="a" style="left:272px;top:239.5px;width:197.6px;height:21px;background:#262727;border-radius:5px;border:1px solid #2f3030;"></div>
<span class="t" id="t54" style="left:280.6px;top:244.73px;font-size:9.8px;line-height:11.76px;color:#f6f6f6;letter-spacing:-0.019px;-webkit-text-stroke:0.2px #f6f6f6;">https://staging.api.haroldwaste.com/graph</span>
<div class="a" style="left:455px;top:241px;width:13px;height:18px;background:linear-gradient(90deg,rgba(38,39,39,0),#262727 80%);"></div>
<span class="t" id="t55" style="left:272.6px;top:268.55px;font-size:8.2px;line-height:9.84px;color:#c9caca;letter-spacing:-0.224px;-webkit-text-stroke:0.2px #c9caca;">Query *</span>
<span class="t" id="t56" style="left:401px;top:268.81px;font-size:7.8px;line-height:9.36px;color:#8a8b8b;font-weight:bold;letter-spacing:0.578px;font-style:italic;">//</span>
<svg class="a" style="left:410.5px;top:269.7px;" width="7" height="7" viewBox="0 0 24 24" fill="none" stroke="#7c7d7d" stroke-width="2.4" stroke-linecap="round" stroke-linejoin="round"><circle cx="10.500" cy="10.500" r="7"/><path d="M16 16l5.500 5.500"/></svg>
<svg class="a" style="left:420.5px;top:269.5px;" width="7.4" height="7.4" viewBox="0 0 24 24" fill="none" stroke="#7c7d7d" stroke-width="2.4" stroke-linecap="round" stroke-linejoin="round"><rect x="3" y="8" width="13" height="13" rx="2"/><path d="M8 8V5a2 2 0 0 1 2-2h9a2 2 0 0 1 2 2v9a2 2 0 0 1-2 2h-3"/></svg>
<svg class="a" style="left:430.7px;top:269.4px;" width="7.6" height="7.6" viewBox="0 0 24 24" fill="none" stroke="#e8e8e8" stroke-width="2" stroke-linecap="round" stroke-linejoin="round"><path d="M2 5.500A1.500 1.500 0 0 1 3.500 4h5.500l2 2.500h9.500A1.500 1.500 0 0 1 22 8v11a1.500 1.500 0 0 1-1.500 1.500h-17A1.500 1.500 0 0 1 2 19z" fill="#7c7d7d" stroke="none"/></svg>
<svg class="a" style="left:440.8px;top:269.4px;" width="7.6" height="7.6" viewBox="0 0 24 24" fill="none" stroke="#e8e8e8" stroke-width="2" stroke-linecap="round" stroke-linejoin="round"><path d="M2 5.500A1.500 1.500 0 0 1 3.500 4h5.500l2 2.500h9.500A1.500 1.500 0 0 1 22 8v3H6l-4 8z" fill="#7c7d7d" stroke="none"/><path d="M6.500 12.500H23.500l-3.500 8H2.500z" fill="#7c7d7d" stroke="none"/></svg>
<svg class="a" style="left:451.2px;top:269.6px;" width="7.2" height="7.2" viewBox="0 0 24 24" fill="none" stroke="#7c7d7d" stroke-width="2.6" stroke-linecap="round" stroke-linejoin="round"><path d="M3 5h18M3 10h18M3 15h12M3 20h8"/></svg>
<svg class="a" style="left:461.2px;top:269.4px;" width="7.6" height="7.6" viewBox="0 0 24 24" fill="none" stroke="#7c7d7d" stroke-width="2.2" stroke-linecap="round" stroke-linejoin="round"><circle cx="12" cy="12" r="9"/><circle cx="12" cy="12" r="3"/><path d="M12 3v4M12 17v4M3 12h4M17 12h4"/></svg>
<div class="a" style="left:272.5px;top:280px;width:197px;height:83px;background:#0a0b1d;border-radius:4px;border:1px solid #0e0f22;overflow:hidden;"></div>
<div class="a" style="left:306px;top:288px;width:142.7px;height:10.8px;background:#181b31;"></div>
<div class="a" style="left:306.3px;top:299px;width:0.6px;height:64px;background:#34374f;"></div>
<div class="a" style="left:325px;top:334px;width:0.6px;height:11px;background:#34374f;"></div>
<div class="a" style="left:451px;top:281px;width:5px;height:0.8px;background:#8a7a3a;"></div>
<div class="a" style="left:453px;top:282.2px;width:7px;height:0.8px;background:#5a6a8a;"></div>
<div class="a" style="left:452px;top:283.4px;width:5px;height:0.8px;background:#4a6a4a;"></div>
<span class="t" id="t57" style="left:286.5px;top:289.18px;font-size:8px;line-height:9.6px;color:#f0f0f6;font-family:'Liberation Mono',monospace;-webkit-text-stroke:0.25px #f0f0f6;">1</span>
<span class="t" id="t58" style="left:286.5px;top:300.88px;font-size:8px;line-height:9.6px;color:#a4a5b2;font-family:'Liberation Mono',monospace;-webkit-text-stroke:0.25px #a4a5b2;">2</span>
<span class="t" id="t59" style="left:286.5px;top:335.28px;font-size:8px;line-height:9.6px;color:#a4a5b2;font-family:'Liberation Mono',monospace;-webkit-text-stroke:0.25px #a4a5b2;">3</span>
<span class="t" id="t60" style="left:286.5px;top:346.68px;font-size:8px;line-height:9.6px;color:#a4a5b2;font-family:'Liberation Mono',monospace;-webkit-text-stroke:0.25px #a4a5b2;">4</span>
<span class="t" id="t61" style="left:306.5px;top:289.18px;font-size:8px;line-height:9.6px;color:#e6c84c;font-family:'Liberation Mono',monospace;letter-spacing:-0.201px;-webkit-text-stroke:0.3px #e6c84c;">mutation</span>
<span class="t" id="t62" style="left:347.9px;top:289.18px;font-size:8px;line-height:9.6px;color:#e6c84c;font-family:'Liberation Mono',monospace;letter-spacing:-0.212px;-webkit-text-stroke:0.3px #e6c84c;">{</span>
<span class="t" id="t63" style="left:324.9px;top:300.88px;font-size:8px;line-height:9.6px;color:#a9c7ea;font-family:'Liberation Mono',monospace;letter-spacing:-0.203px;-webkit-text-stroke:0.3px #a9c7ea;">login</span>
<span class="t" id="t64" style="left:347.9px;top:300.88px;font-size:8px;line-height:9.6px;color:#d66fd0;font-family:'Liberation Mono',monospace;letter-spacing:-0.212px;-webkit-text-stroke:0.3px #d66fd0;">(</span>
<span class="t" id="t65" style="left:352.5px;top:300.88px;font-size:8px;line-height:9.6px;color:#a9c7ea;font-family:'Liberation Mono',monospace;letter-spacing:-0.202px;-webkit-text-stroke:0.3px #a9c7ea;">email:</span>
<span class="t" id="t66" style="left:380.1px;top:300.88px;font-size:8px;line-height:9.6px;color:#6fd35f;font-family:'Liberation Mono',monospace;letter-spacing:-0.212px;-webkit-text-stroke:0.3px #6fd35f;">"</span>
<div class="a" style="left:385px;top:301.2px;width:26.2px;height:7.2px;background:#e8412a;"></div>
<div class="a" style="left:324px;top:311.2px;width:94.2px;height:11.4px;background:#e8412a;"></div>
<span class="t" id="t67" style="left:418.6px;top:314.08px;font-size:8px;line-height:9.6px;color:#6fd35f;font-family:'Liberation Mono',monospace;letter-spacing:-0.212px;-webkit-text-stroke:0.3px #6fd35f;">"</span>
<span class="t" id="t68" style="left:422.6px;top:314.08px;font-size:8px;line-height:9.6px;color:#a9c7ea;font-family:'Liberation Mono',monospace;letter-spacing:-0.212px;-webkit-text-stroke:0.3px #a9c7ea;">,</span>
<span class="t" id="t69" style="left:324.9px;top:324.08px;font-size:8px;line-height:9.6px;color:#a9c7ea;font-family:'Liberation Mono',monospace;letter-spacing:-0.202px;-webkit-text-stroke:0.3px #a9c7ea;">password:</span>
<span class="t" id="t70" style="left:370.9px;top:324.08px;font-size:8px;line-height:9.6px;color:#6fd35f;font-family:'Liberation Mono',monospace;letter-spacing:-0.202px;-webkit-text-stroke:0.3px #6fd35f;">"12345678"</span>
<span class="t" id="t71" style="left:416.9px;top:324.08px;font-size:8px;line-height:9.6px;color:#d66fd0;font-family:'Liberation Mono',monospace;letter-spacing:-0.212px;-webkit-text-stroke:0.3px #d66fd0;">)</span>
<span class="t" id="t72" style="left:426.1px;top:324.08px;font-size:8px;line-height:9.6px;color:#d66fd0;font-family:'Liberation Mono',monospace;letter-spacing:-0.212px;-webkit-text-stroke:0.3px #d66fd0;">{</span>
<span class="t" id="t73" style="left:343.3px;top:335.28px;font-size:8px;line-height:9.6px;color:#a9c7ea;font-family:'Liberation Mono',monospace;letter-spacing:-0.203px;-webkit-text-stroke:0.3px #a9c7ea;">token</span>
<span class="t" id="t74" style="left:324.9px;top:346.68px;font-size:8px;line-height:9.6px;color:#d66fd0;font-family:'Liberation Mono',monospace;letter-spacing:-0.212px;-webkit-text-stroke:0.3px #d66fd0;">}</span>
<div class="a" style="left:272.500px;top:356px;width:197px;height:7px;overflow:hidden"><span class="t" style="left:14px;top:1px;font-family:'Liberation Mono',monospace;font-size:8px;line-height:9.200px;-webkit-text-stroke:0.25px;color:#a4a5b2">5</span><span class="t" style="left:34px;top:1px;font-family:'Liberation Mono',monospace;font-size:8px;line-height:9.200px;-webkit-text-stroke:0.25px;color:#e6c84c">}</span></div>
<span class="t" id="t75" style="left:272.6px;top:373.72px;font-size:8.4px;line-height:10.08px;color:#c9caca;letter-spacing:-0.189px;-webkit-text-stroke:0.2px #c9caca;">Variables</span>
<div class="a" style="left:312px;top:372px;width:18.6px;height:13.6px;background:#262727;border-radius:4px;border:1px solid #303131;"></div>
<svg class="a" style="left:316.9px;top:374.4px;" width="8.8" height="8.8" viewBox="0 0 24 24" fill="none" stroke="#f4f4f4" stroke-width="2.8" stroke-linecap="round" stroke-linejoin="round"><g transform="rotate(45 12 12)"><path d="M5.500 7.500h13v3.500a6.500 6.500 0 0 1-13 0z" fill="#f4f4f4" stroke="#f4f4f4" stroke-width="1.500"/><path d="M9 1.500v6M15 1.500v6M12 17v6.500"/></g></svg>
<div class="a" style="left:401.2px;top:371.5px;width:53.8px;height:14.3px;background:#3b86d6;border-radius:4.5px;"></div>
<svg class="a" style="left:407.3px;top:375.8px;" width="5.8" height="5.8" viewBox="0 0 24 24" fill="none" stroke="#fff" stroke-width="3.8" stroke-linecap="round" stroke-linejoin="round"><path d="M12 3v18M3 12h18"/></svg>
<span class="t" id="t76" style="left:417px;top:373.82px;font-size:8.4px;line-height:10.08px;color:#fff;font-weight:bold;letter-spacing:-0.404px;">Add item</span>
<svg class="a" style="left:460.5px;top:375.0px;" width="7.6" height="7.6" viewBox="0 0 24 24" fill="none" stroke="#e8e8e8" stroke-width="2" stroke-linecap="round" stroke-linejoin="round"><circle cx="12" cy="12" r="12" fill="#f2f2f2" stroke="none"/><path d="M12 11v7" stroke="#333434" stroke-width="2.800" stroke-linecap="butt"/><circle cx="12" cy="6.600" r="1.700" fill="#333434" stroke="none"/></svg>
<span class="t" id="t77" style="left:272.6px;top:398.72px;font-size:8.4px;line-height:10.08px;color:#c9caca;letter-spacing:-0.179px;-webkit-text-stroke:0.2px #c9caca;">Headers</span>
<div class="a" style="left:309.2px;top:397px;width:18.6px;height:13.6px;background:#262727;border-radius:4px;border:1px solid #303131;"></div>
<svg class="a" style="left:314.1px;top:399.4px;" width="8.8" height="8.8" viewBox="0 0 24 24" fill="none" stroke="#f4f4f4" stroke-width="2.8" stroke-linecap="round" stroke-linejoin="round"><g transform="rotate(45 12 12)"><path d="M5.500 7.500h13v3.500a6.500 6.500 0 0 1-13 0z" fill="#f4f4f4" stroke="#f4f4f4" stroke-width="1.500"/><path d="M9 1.500v6M15 1.500v6M12 17v6.500"/></g></svg>
<div class="a" style="left:401.2px;top:396.6px;width:53.8px;height:14.3px;background:#3b86d6;border-radius:4.5px;"></div>
<svg class="a" style="left:407.3px;top:400.9px;" width="5.8" height="5.8" viewBox="0 0 24 24" fill="none" stroke="#fff" stroke-width="3.8" stroke-linecap="round" stroke-linejoin="round"><path d="M12 3v18M3 12h18"/></svg>
<span class="t" id="t78" style="left:417px;top:398.92px;font-size:8.4px;line-height:10.08px;color:#fff;font-weight:bold;letter-spacing:-0.404px;">Add item</span>
<svg class="a" style="left:460.5px;top:400.0px;" width="7.6" height="7.6" viewBox="0 0 24 24" fill="none" stroke="#e8e8e8" stroke-width="2" stroke-linecap="round" stroke-linejoin="round"><circle cx="12" cy="12" r="12" fill="#f2f2f2" stroke="none"/><path d="M12 11v7" stroke="#333434" stroke-width="2.800" stroke-linecap="butt"/><circle cx="12" cy="6.600" r="1.700" fill="#333434" stroke="none"/></svg>
<span class="t" id="t79" style="left:272.6px;top:420.72px;font-size:8.4px;line-height:10.08px;color:#c9caca;letter-spacing:-0.251px;-webkit-text-stroke:0.2px #c9caca;">Result key</span>
<div class="a" style="left:272px;top:432.7px;width:197.6px;height:16.2px;background:#292a2a;border-radius:4px;border:1px solid #303131;"></div>
<span class="t" id="t80" style="left:277.6px;top:435.33px;font-size:9.8px;line-height:11.76px;color:#8a8b8b;letter-spacing:-0.114px;">result.key</span>
<div class="a" style="left:272.6px;top:459.8px;width:15.6px;height:8.8px;background:#2f3030;border-radius:4.4px;"></div>
<div class="a" style="left:273.9px;top:461.2px;width:6px;height:6px;background:#8f9090;border-radius:3px;"></div>
<span class="t" id="t81" style="left:293.8px;top:458.73px;font-size:9.8px;line-height:11.76px;color:#f4f4f4;letter-spacing:-0.162px;-webkit-text-stroke:0.2px #f4f4f4;">Send credentials</span>
<svg class="a" style="left:460.5px;top:460.6px;" width="7.6" height="7.6" viewBox="0 0 24 24" fill="none" stroke="#e8e8e8" stroke-width="2" stroke-linecap="round" stroke-linejoin="round"><circle cx="12" cy="12" r="12" fill="#f2f2f2" stroke="none"/><path d="M12 11v7" stroke="#333434" stroke-width="2.800" stroke-linecap="butt"/><circle cx="12" cy="6.600" r="1.700" fill="#333434" stroke="none"/></svg>
<div class="a" style="left:272.6px;top:480px;width:15.6px;height:9px;background:#3b86d6;border-radius:4.5px;"></div>
<div class="a" style="left:280.3px;top:481.2px;width:6.6px;height:6.6px;background:#fff;border-radius:3.3px;"></div>
<span class="t" id="t82" style="left:293.8px;top:479.03px;font-size:9.8px;line-height:11.76px;color:#f4f4f4;letter-spacing:-0.156px;-webkit-text-stroke:0.2px #f4f4f4;">Return data only</span>
<div class="a" style="left:265.5px;top:497px;width:210.6px;height:0.8px;background:#323333;"></div>
<div class="a" style="left:272.5px;top:505.7px;width:28.6px;height:14.8px;background:#262727;border-radius:4px;border:1px solid #323333;"></div>
<span class="t" id="t83" style="left:277.8px;top:508.22px;font-size:8.4px;line-height:10.08px;color:#f4f4f4;font-weight:bold;letter-spacing:-0.508px;">Back</span>
<div class="a" style="left:425.2px;top:505.7px;width:44px;height:14.8px;background:#3b86d6;border-radius:4.5px;"></div>
<span class="t" id="t84" style="left:430.6px;top:508.22px;font-size:8.4px;line-height:10.08px;color:#fff;font-weight:bold;letter-spacing:-0.387px;">Continue</span>
<svg class="a" style="left:367.1px;top:533.9px;" width="7.4" height="7.4" viewBox="0 0 24 24" fill="none" stroke="#8a8b8b" stroke-width="2.4" stroke-linecap="round" stroke-linejoin="round"><path d="M12 4v16M5.500 13.500L12 20l6.500-6.500"/></svg>
<div class="a" style="left:264.2px;top:546.3px;width:213px;height:44.3px;background:#1b1c1c;border-radius:5px;border:1px solid #2f3030;"></div>
<span class="t" id="t85" style="left:272.6px;top:554.03px;font-size:9.8px;line-height:11.76px;color:#c9caca;letter-spacing:-0.170px;-webkit-text-stroke:0.2px #c9caca;">Fetch data</span>
<svg class="a" style="left:458.8px;top:554.4px;" width="10.4" height="10.4" viewBox="0 0 24 24" fill="none" stroke="#68c995" stroke-width="2.1" stroke-linecap="round" stroke-linejoin="round"><circle cx="12" cy="12" r="9.500"/><path d="M7.500 12.500l3 3 6-6.500"/></svg>
<span class="t" id="t86" style="left:272.6px;top:571.53px;font-size:9.8px;line-height:11.76px;color:#f4f4f4;letter-spacing:-0.066px;-webkit-text-stroke:0.2px #f4f4f4;">This collection is fetched automatically</span>
<svg class="a" style="left:367.1px;top:595.5px;" width="7.4" height="7.4" viewBox="0 0 24 24" fill="none" stroke="#8a8b8b" stroke-width="2.4" stroke-linecap="round" stroke-linejoin="round"><path d="M12 4v16M5.500 13.500L12 20l6.500-6.500"/></svg>
<div class="a" style="left:264.2px;top:608.2px;width:213px;height:40px;background:#1b1c1c;border-radius:5px;border:1px solid #2f3030;"></div>
<span class="t" id="t87" style="left:272.6px;top:616.23px;font-size:9.8px;line-height:11.76px;color:#c9caca;letter-spacing:-0.136px;-webkit-text-stroke:0.2px #c9caca;">Sort, Filter and Pagination</span>
<svg class="a" style="left:458.8px;top:616.5px;" width="10.4" height="10.4" viewBox="0 0 24 24" fill="none" stroke="#68c995" stroke-width="2.1" stroke-linecap="round" stroke-linejoin="round"><circle cx="12" cy="12" r="9.500"/><path d="M7.500 12.500l3 3 6-6.500"/></svg>
<span class="t" id="t88" style="left:272.6px;top:633.33px;font-size:9.8px;line-height:11.76px;color:#f4f4f4;letter-spacing:-0.143px;-webkit-text-stroke:0.2px #f4f4f4;">Collection must be an array</span>
<svg class="a" style="left:696.5px;top:99.9px;" width="8.2" height="8.2" viewBox="0 0 24 24" fill="none" stroke="#f2f2f2" stroke-width="2.6" stroke-linecap="round" stroke-linejoin="round"><path d="M5 5l14 14M19 5L5 19"/></svg>
<span class="t" id="t89" style="left:676.8px;top:118.22px;font-size:8.4px;line-height:10.08px;color:#62c38c;letter-spacing:-0.179px;">Success</span>
<span class="t" id="t90" style="left:497px;top:130.12px;font-size:8.4px;line-height:10.08px;color:#a8a9a9;letter-spacing:0.099px;-webkit-text-stroke:0.2px #a8a9a9;">login</span>
<span class="t" id="t91" style="left:497px;top:149.82px;font-size:8.4px;line-height:10.08px;color:#f4f4f4;font-weight:bold;letter-spacing:-0.229px;">token</span>
<div class="a" style="left:497px;top:161.8px;width:210.2px;height:20.8px;background:#2b2c2c;border-radius:5px;"></div>
<span class="t" id="t92" style="left:500.6px;top:166.28px;font-size:9.4px;line-height:11.28px;color:#f6f6f6;letter-spacing:-0.122px;-webkit-text-stroke:0.25px #f6f6f6;">eyJhbGciOiJIUzI1NiIsInR5cCI6IkpXVCJ9.eyJI...</span>
<div class="a" style="left:718.2px;top:96.2px;width:108.8px;height:40px;background:#182550;"></div>
<div class="a" style="left:718.2px;top:106.7px;width:108.8px;height:19.4px;background:#0b0f3e;"></div>
<div class="a" style="left:718.2px;top:125.6px;width:108.8px;height:0.6px;border-top:1px dashed #1c2a5e;"></div>
<div class="a" style="left:718.2px;top:135.8px;width:108.8px;height:499.6px;background:#f3f5fd;"></div>
<div class="a" style="left:723.3px;top:108.2px;width:15.6px;height:15.6px;background:#4b3fe6;border-radius:8px;"></div>
<div class="a" style="left:727.3px;top:112.5px;width:7.4px;height:7px;background:#fff;border-radius:1.4px;"></div>
<div class="a" style="left:729px;top:116.8px;width:1.4px;height:1.2px;background:#4b3fe6;"></div>
<div class="a" style="left:731.8px;top:116.8px;width:1.4px;height:1.2px;background:#4b3fe6;"></div>
<span class="t" id="t93" style="left:741.8px;top:107.67px;font-size:8.8px;line-height:10.56px;color:#fff;letter-spacing:-0.521px;-webkit-text-stroke:0.35px #fff;">Himans</span>
<span class="t" id="t94" style="left:741.8px;top:118.1px;font-size:6.4px;line-height:7.68px;color:#fff;font-weight:bold;letter-spacing:-0.456px;">Jules AI LLC</span>
<div class="a" style="left:768.3px;top:100.8px;width:52px;height:15.2px;background:#2b2c2c;border-radius:5px;"></div>
<svg class="a" style="left:773.3px;top:104.3px;" width="8" height="8" viewBox="0 0 24 24" fill="none" stroke="#4a9bea" stroke-width="2.8" stroke-linecap="round" stroke-linejoin="round"><g transform="rotate(-45 12 12)"><rect x="1.500" y="8" width="12" height="8" rx="4"/><rect x="10.500" y="8" width="12" height="8" rx="4"/></g></svg>
<span class="t" id="t95" style="left:784px;top:103.03px;font-size:9.8px;line-height:11.76px;color:#4a9bea;font-weight:bold;letter-spacing:-0.370px;">Header</span>
<div class="a" style="left:809.4px;top:116.2px;width:1px;height:1px;background:#a8a8b0;"></div>
<div class="a" style="left:801.6px;top:119.2px;width:18.8px;height:18.6px;background:#2b2c2c;border-radius:5px;"></div>
<svg class="a" style="left:806.3px;top:123.8px;" width="9.4" height="9.4" viewBox="0 0 24 24" fill="none" stroke="#f2f2f2" stroke-width="2" stroke-linecap="round" stroke-linejoin="round"><rect x="3" y="3" width="18" height="18" rx="2.500" fill="#0e1438"/><rect x="3" y="3" width="18" height="6" fill="#d8d8d8" opacity=".6" stroke="none"/><path d="M3 9h18"/><path d="M3.500 19.500h17" stroke-width="3"/></svg>
<div class="a" style="left:718.2px;top:211.2px;width:108.8px;height:144.4px;background:#ffffff;"></div>
<div class="a" style="left:718.2px;top:268.2px;width:108.8px;height:0.9px;background:#dcdcea;"></div>
<div class="a" style="left:718.2px;top:297.3px;width:108.8px;height:0.9px;background:#dcdcea;"></div>
<div class="a" style="left:718.2px;top:326.4px;width:108.8px;height:0.9px;background:#dcdcea;"></div>
<div class="a" style="left:718.2px;top:355.4px;width:108.8px;height:0.9px;background:#dcdcea;"></div>
<div class="a" style="left:718.200px;top:200px;width:108.800px;height:170px;overflow:hidden">
<span class="t" id="t96" style="left:-8.7px;top:51.25px;font-size:6.8px;line-height:8.16px;color:#101018;font-weight:bold;letter-spacing:-0.165px;">Type</span>
<span class="t" id="t97" style="left:23.5px;top:51.25px;font-size:6.8px;line-height:8.16px;color:#101018;font-weight:bold;letter-spacing:-0.081px;">Release condition</span>
<span class="t" id="t98" style="left:97.8px;top:51.25px;font-size:6.8px;line-height:8.16px;color:#101018;font-weight:bold;">Material</span>
<span class="t" id="t99" style="left:-9.4px;top:79.95px;font-size:6.8px;line-height:8.16px;color:#33333c;letter-spacing:-0.343px;">Type1</span>
<span class="t" id="t100" style="left:23.5px;top:79.95px;font-size:6.8px;line-height:8.16px;color:#33333c;">ReleaseEvent</span>
<span class="t" id="t101" style="left:97.8px;top:79.95px;font-size:6.8px;line-height:8.16px;color:#33333c;">1.05</span>
<span class="t" id="t102" style="left:-9.4px;top:137.65px;font-size:6.8px;line-height:8.16px;color:#33333c;letter-spacing:-0.343px;">Type1</span>
<span class="t" id="t103" style="left:23.5px;top:137.65px;font-size:6.8px;line-height:8.16px;color:#33333c;">ReleaseEvent</span>
<span class="t" id="t104" style="left:97.8px;top:137.65px;font-size:6.8px;line-height:8.16px;color:#33333c;">1.05</span>
<span class="t" id="t105" style="left:23.5px;top:108.75px;font-size:6.8px;line-height:8.16px;color:#33333c;">-</span>
<span class="t" id="t106" style="left:97.8px;top:108.75px;font-size:6.8px;line-height:8.16px;color:#33333c;">1.05</span>
</div>
<div class="a" style="left:827px;top:90.8px;width:6px;height:550px;background:#2b2c2c;"></div>
<svg class="a" style="left:840.3px;top:96.3px;" width="10" height="10" viewBox="0 0 24 24" fill="none" stroke="#f4f4f4" stroke-width="2.4" stroke-linecap="round" stroke-linejoin="round"><rect x="-1.500" y="8.200" width="27" height="7.600" rx="3.800" transform="rotate(45 12 12)" fill="#1b1c1c"/><rect x="-1.500" y="8.200" width="27" height="7.600" rx="3.800" transform="rotate(-45 12 12)" fill="#1b1c1c"/></svg>
<span class="t" id="t107" style="left:854.6px;top:95.92px;font-size:8.4px;line-height:10.08px;color:#f4f4f4;font-weight:bold;letter-spacing:-0.507px;">Edit</span>
<svg class="a" style="left:920.8px;top:143.9px;" width="15" height="15" viewBox="0 0 24 24" fill="none" stroke="#ececec" stroke-width="1.9" stroke-linecap="round" stroke-linejoin="round"><path d="M14.500 9.500l1.700 4.300 4.300 1.700-4.300 1.700-1.700 4.300-1.700-4.300-4.300-1.700 4.300-1.700z"/><path d="M7 2.500l1.100 2.900L11 6.500 8.100 7.600 7 10.500 5.900 7.600 3 6.500l2.900-1.100z"/></svg>
<span class="t" id="t108" style="left:906px;top:167.46px;font-size:12.4px;line-height:14.88px;color:#f6f6f6;font-weight:bold;letter-spacing:-0.572px;">Element</span>
<span class="t" id="t109" style="left:876px;top:186.53px;font-size:9.8px;line-height:11.76px;color:#c9caca;letter-spacing:-0.061px;-webkit-text-stroke:0.2px #c9caca;">Select element to style it</span>
<div class="a" style="left:904px;top:558.5px;width:115px;height:76.5px;border-radius:8px;box-shadow:0 0 7px 3px rgba(8,8,8,.5);"></div>
<div class="a" style="left:907px;top:561.4px;width:109px;height:70.7px;background:#ffffff;border-radius:4.5px;"></div>
<div class="a" style="left:910.8px;top:565px;width:101.800px;height:62.800px;overflow:hidden;background:#1b1c1c;border-radius:1px">
<div class="a" style="left:0px;top:0px;width:101.8px;height:2.9px;background:#c5c4d5"></div>
<div class="a" style="left:0px;top:2.9px;width:101.8px;height:2.8px;background:#e8e8ee"></div>
<div class="a" style="left:10px;top:3.4px;width:63px;height:1.8px;background:#cbcbd3"></div>
<div class="a" style="left:0.6px;top:0.5px;width:16px;height:2.4px;background:#e8e8ee"></div>
<div class="a" style="left:1.3px;top:1px;width:1.2px;height:1.2px;background:#1f1f22"></div>
<div class="a" style="left:18px;top:1px;width:1.3px;height:1.3px;background:#d6349b"></div>
<div class="a" style="left:35px;top:1px;width:1.3px;height:1.3px;background:#d6349b"></div>
<div class="a" style="left:52px;top:1px;width:1.3px;height:1.3px;background:#d2344f"></div>
<div class="a" style="left:75px;top:3.6px;width:20px;height:1.2px;background:#9a9ab0"></div>
<div class="a" style="left:0px;top:5.7px;width:101.8px;height:3.1px;background:#151616"></div>
<div class="a" style="left:93.5px;top:6.4px;width:7.5px;height:1.9px;background:#3d90e8"></div>
<div class="a" style="left:91.6px;top:6.6px;width:1.5px;height:1.5px;background:#ea5a3c"></div>
<div class="a" style="left:1px;top:6.6px;width:12px;height:1.3px;background:#3a3b3b"></div>
<div class="a" style="left:17px;top:6.6px;width:4px;height:1.3px;background:#25374e"></div>
<div class="a" style="left:23px;top:6.9px;width:22px;height:0.7px;background:#5a5b5b"></div>
<div class="a" style="left:74px;top:6.5px;width:16px;height:1.5px;background:#2c2d2d"></div>
<div class="a" style="left:24.4px;top:8.8px;width:24px;height:54px;background:#262728"></div>
<div class="a" style="left:25.4px;top:11.6px;width:22px;height:5.8px;background:#1b1c1c"></div>
<div class="a" style="left:26.4px;top:12.8px;width:6px;height:0.7px;background:#8a8b8b"></div>
<div class="a" style="left:26.4px;top:14.2px;width:4.5px;height:0.8px;background:#d0d0d0"></div>
<div class="a" style="left:26.4px;top:15.5px;width:4.5px;height:0.8px;background:#d0d0d0"></div>
<div class="a" style="left:25.4px;top:19px;width:22px;height:9px;background:#1b1c1c"></div>
<div class="a" style="left:26.4px;top:20px;width:7px;height:0.7px;background:#c0c0c0"></div>
<div class="a" style="left:26.4px;top:22px;width:20px;height:4.6px;background:#2b2c3e"></div>
<div class="a" style="left:27px;top:22.8px;width:18px;height:0.6px;background:#8a8ba0"></div>
<div class="a" style="left:27px;top:24px;width:16px;height:0.6px;background:#8a8ba0"></div>
<div class="a" style="left:27px;top:25.2px;width:12px;height:0.6px;background:#8a8ba0"></div>
<div class="a" style="left:25.4px;top:29.6px;width:22px;height:13.4px;background:#1b1c1c"></div>
<div class="a" style="left:26.4px;top:30.6px;width:5px;height:0.7px;background:#c0c0c0"></div>
<div class="a" style="left:26.4px;top:32.4px;width:12px;height:0.6px;background:#7a7b7b"></div>
<div class="a" style="left:26.4px;top:33.6px;width:6.5px;height:1.9px;background:#3b86d6"></div>
<div class="a" style="left:26.4px;top:36.6px;width:5px;height:0.6px;background:#8a8b8b"></div>
<div class="a" style="left:26.4px;top:39.3px;width:2.5px;height:1.2px;background:#4a4b4b"></div>
<div class="a" style="left:42px;top:38.9px;width:4.4px;height:1.8px;background:#3b86d6"></div>
<div class="a" style="left:25.4px;top:44.6px;width:22px;height:4.6px;background:#1b1c1c"></div>
<div class="a" style="left:26.4px;top:45.5px;width:11px;height:0.6px;background:#9a9b9b"></div>
<div class="a" style="left:26.4px;top:47.2px;width:14px;height:0.7px;background:#e0e0e0"></div>
<div class="a" style="left:25.4px;top:50.2px;width:22px;height:2.4px;background:#1b1c1c"></div>
<div class="a" style="left:32px;top:51px;width:9px;height:0.7px;background:#d8d8d8"></div>
<div class="a" style="left:25.4px;top:53.5px;width:21px;height:0.8px;background:#2f5c94"></div>
<div class="a" style="left:25.4px;top:55.6px;width:22px;height:8px;background:#2b2c2c"></div>
<div class="a" style="left:2.6px;top:10.2px;width:3px;height:0.8px;background:#77787a"></div>
<div class="a" style="left:2.6px;top:12.4px;width:3px;height:0.8px;background:#77787a"></div>
<div class="a" style="left:1.6px;top:14.6px;width:3px;height:0.8px;background:#d8d8d8"></div>
<div class="a" style="left:2.6px;top:16.2px;width:3px;height:0.8px;background:#77787a"></div>
<div class="a" style="left:2.6px;top:17.9px;width:3px;height:0.8px;background:#77787a"></div>
<div class="a" style="left:2.6px;top:19.5px;width:3px;height:0.8px;background:#77787a"></div>
<div class="a" style="left:2.6px;top:21.1px;width:3px;height:0.8px;background:#77787a"></div>
<div class="a" style="left:2.6px;top:22.7px;width:3px;height:0.8px;background:#77787a"></div>
<div class="a" style="left:2.6px;top:24.3px;width:3px;height:0.8px;background:#77787a"></div>
<div class="a" style="left:1.6px;top:35.6px;width:3px;height:0.8px;background:#d8d8d8"></div>
<div class="a" style="left:2.6px;top:37.8px;width:3px;height:0.8px;background:#77787a"></div>
<div class="a" style="left:2.6px;top:39.4px;width:3px;height:0.8px;background:#77787a"></div>
<div class="a" style="left:2.6px;top:41px;width:3px;height:0.8px;background:#77787a"></div>
<div class="a" style="left:2.6px;top:42.6px;width:3px;height:0.8px;background:#77787a"></div>
<div class="a" style="left:2.6px;top:44.2px;width:3px;height:0.8px;background:#77787a"></div>
<div class="a" style="left:2.6px;top:45.8px;width:3px;height:0.8px;background:#77787a"></div>
<div class="a" style="left:2.6px;top:47.4px;width:3px;height:0.8px;background:#77787a"></div>
<div class="a" style="left:2.6px;top:49px;width:3px;height:0.8px;background:#77787a"></div>
<div class="a" style="left:2.6px;top:50.6px;width:3px;height:0.8px;background:#77787a"></div>
<div class="a" style="left:2.6px;top:52.2px;width:3px;height:0.8px;background:#77787a"></div>
<div class="a" style="left:2.6px;top:53.8px;width:3px;height:0.8px;background:#77787a"></div>
<div class="a" style="left:1px;top:23.8px;width:22.4px;height:2px;background:#262727"></div>
<div class="a" style="left:20px;top:14px;width:3.6px;height:1.5px;background:#3a3b3b"></div>
<div class="a" style="left:20px;top:35.2px;width:3.6px;height:1.5px;background:#3a3b3b"></div>
<div class="a" style="left:20px;top:12px;width:3px;height:0.7px;background:#6a6b6b"></div>
<div class="a" style="left:49.3px;top:10.5px;width:2px;height:0.8px;background:#d0d0d0"></div>
<div class="a" style="left:49.3px;top:12.4px;width:10px;height:0.6px;background:#7a7b7b"></div>
<div class="a" style="left:49.3px;top:14px;width:6px;height:1px;background:#3b86d6"></div>
<div class="a" style="left:68px;top:15.6px;width:2.5px;height:0.6px;background:#5a8a6a"></div>
<div class="a" style="left:49.3px;top:17px;width:2px;height:0.6px;background:#9a9b9b"></div>
<div class="a" style="left:49.3px;top:18.6px;width:20.5px;height:1.8px;background:#3a3b3b"></div>
<div class="a" style="left:69.4px;top:10px;width:1px;height:1px;background:#c0c0c0"></div>
<div class="a" style="left:71.4px;top:8.8px;width:11px;height:54px;background:#f3f5fd"></div>
<div class="a" style="left:71.4px;top:8.8px;width:11px;height:3.4px;background:#182550"></div>
<div class="a" style="left:72px;top:9.6px;width:1.4px;height:1.4px;background:#4b3fe6"></div>
<div class="a" style="left:74px;top:9.7px;width:5px;height:0.6px;background:#e0e0f0"></div>
<div class="a" style="left:71.4px;top:20.4px;width:11px;height:15.4px;background:#ffffff"></div>
<div class="a" style="left:73.6px;top:24.4px;width:5.5px;height:0.8px;background:#55556a"></div>
<div class="a" style="left:73.6px;top:27.4px;width:4.2px;height:0.7px;background:#a0a0b0"></div>
<div class="a" style="left:73.6px;top:33px;width:4.2px;height:0.7px;background:#a0a0b0"></div>
<div class="a" style="left:71.4px;top:26px;width:11px;height:0.3px;background:#d8d8e6"></div>
<div class="a" style="left:71.4px;top:29px;width:11px;height:0.3px;background:#d8d8e6"></div>
<div class="a" style="left:71.4px;top:32px;width:11px;height:0.3px;background:#d8d8e6"></div>
<div class="a" style="left:82.4px;top:8.8px;width:0.7px;height:54px;background:#2b2c2c"></div>
<div class="a" style="left:84px;top:9.6px;width:3px;height:0.8px;background:#c0c0c0"></div>
<div class="a" style="left:91.6px;top:13.2px;width:1.6px;height:1.6px;background:#9a9a9a"></div>
<div class="a" style="left:89.4px;top:16px;width:6px;height:1.1px;background:#e8e8e8"></div>
<div class="a" style="left:87.4px;top:18px;width:10px;height:0.8px;background:#9a9a9a"></div>
<div class="a" style="left:97.400px;top:58.400px;width:3.600px;height:3.600px;border-radius:2px;background:#fff;border:0.900px solid #3d90e8"></div>
</div>
</body></html>
